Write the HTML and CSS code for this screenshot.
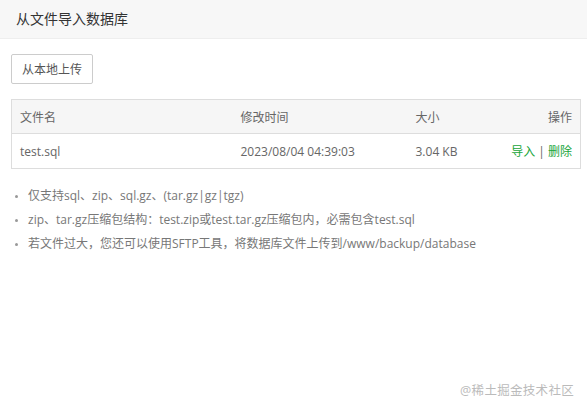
FILE: index.html
```html
<!DOCTYPE html>
<html lang="zh">
<head>
<meta charset="utf-8">
<link rel="stylesheet" href="styles.css">
</head>
<body>
<div class="dialog">
  <div class="title">从文件导入数据库</div>
  <div class="content">
    <button class="btn">从本地上传</button>
    <table class="table">
      <thead>
        <tr><th class="c-name">文件名</th><th class="c-time">修改时间</th><th class="c-size">大小</th><th class="c-op">操作</th></tr>
      </thead>
      <tbody>
        <tr><td>test.sql</td><td>2023/08/04 04:39:03</td><td>3.04 KB</td><td class="c-op"><a class="link">导入</a> | <a class="link">删除</a></td></tr>
      </tbody>
    </table>
    <ul class="tips">
      <li>仅支持sql、zip、sql.gz、(tar.gz|gz|tgz)</li>
      <li>zip、tar.gz压缩包结构：test.zip或test.tar.gz压缩包内，必需包含test.sql</li>
      <li>若文件过大，您还可以使用SFTP工具，将数据库文件上传到/www/backup/database</li>
    </ul>
  </div>
  <div class="watermark">@稀土掘金技术社区</div>
</div>
</body>
</html>
```

FILE: styles.css
```css
* { box-sizing: border-box; }
html, body { margin: 0; padding: 0; background: #fff; }
body {
  font-family: "Open Sans", "Noto Sans CJK SC", sans-serif;
  color: #666;
  font-size: 12px;
}
.dialog { width: 587px; height: 410px; position: relative; overflow: hidden; }
.title {
  height: 39px;
  line-height: 38px;
  padding-left: 16px;
  font-size: 14px;
  color: #333;
  background: #f7f7f7;
  border-bottom: 1px solid #eee;
}
.content { padding: 15px 6px 0 11px; }
.btn {
  display: block;
  height: 30px;
  width: 82px;
  padding: 0;
  font-family: inherit;
  font-size: 12px;
  color: #555;
  background: #fff;
  border: 1px solid #ccc;
  border-radius: 2px;
}
.table {
  margin-top: 15px;
  width: 570px;
  table-layout: fixed;
  border-collapse: collapse;
  border: 1px solid #ddd;
}
.table th, .table td {
  height: 34px;
  padding: 0 8px;
  text-align: left;
  font-weight: normal;
  font-size: 12px;
  color: #666;
}
.table th { background: #f6f6f6; border-bottom: 1px solid #ddd; }
.table td { height: 35px; }
.c-name { width: 221px; }
.c-time { width: 175px; }
.c-size { width: 80px; }
.table .c-op { text-align: right; }
.link { color: #20a53a; }
.tips {
  margin: 15px 0 0;
  padding: 0 0 0 17px;
  list-style: disc;
  color: #777;
}
.tips li { line-height: 24px; padding-left: 0; }
.tips li::marker { font-size: 8px; color: #999; }
.watermark {
  position: absolute;
  right: 13px;
  top: 380px;
  font-size: 12.5px;
  color: #bbb;
  letter-spacing: 0.3px;
}
```
